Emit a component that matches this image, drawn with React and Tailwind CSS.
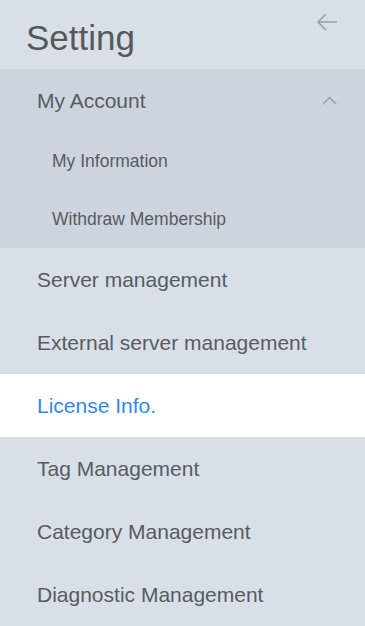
import React from "react";

const items = [
  { label: "Server management" },
  { label: "External server management" },
  { label: "License Info.", active: true },
  { label: "Tag Management" },
  { label: "Category Management" },
  { label: "Diagnostic Management" },
];

const App = () => {
  return (
    <div
      className="w-[365px] h-[626px] bg-[#d9dfe7] text-[#585c61] overflow-hidden"
      style={{ fontFamily: '"Liberation Sans", Arial, sans-serif' }}
    >
      {/* Header */}
      <div className="flex items-start justify-between h-[69px] pl-[26px] pr-[26px]">
        <h1 className="text-[35px] leading-none mt-[20px] text-[#55595e]">Setting</h1>
        <button className="mt-[12px] text-[#9aa0a8]">
          <svg width="24" height="20" viewBox="0 0 24 20" fill="none" stroke="currentColor" strokeWidth="1.5">
            <path d="M22 10H3M11 2L3 10l8 8" />
          </svg>
        </button>
      </div>

      {/* My Account group */}
      <div className="bg-[#cdd4de]">
        <div className="flex items-center justify-between h-[63px] pl-[37px] pr-[28px]">
          <span className="text-[21px]">My Account</span>
          <svg width="15" height="9" viewBox="0 0 15 9" fill="none" stroke="#9aa0a8" strokeWidth="1.5">
            <path d="M1 8l6.5-6.5L14 8" />
          </svg>
        </div>
        <div className="flex items-center h-[58px] pl-[52px] text-[17.5px]">My Information</div>
        <div className="flex items-center h-[58px] pl-[52px] text-[17.5px]">Withdraw Membership</div>
      </div>

      {/* Menu */}
      {items.map((item) => (
        <div
          key={item.label}
          className={`flex items-center h-[63px] pl-[37px] text-[21px] ${
            item.active ? "bg-white text-[#2b8af6]" : ""
          }`}
        >
          {item.label}
        </div>
      ))}
    </div>
  );
};

export default App;
